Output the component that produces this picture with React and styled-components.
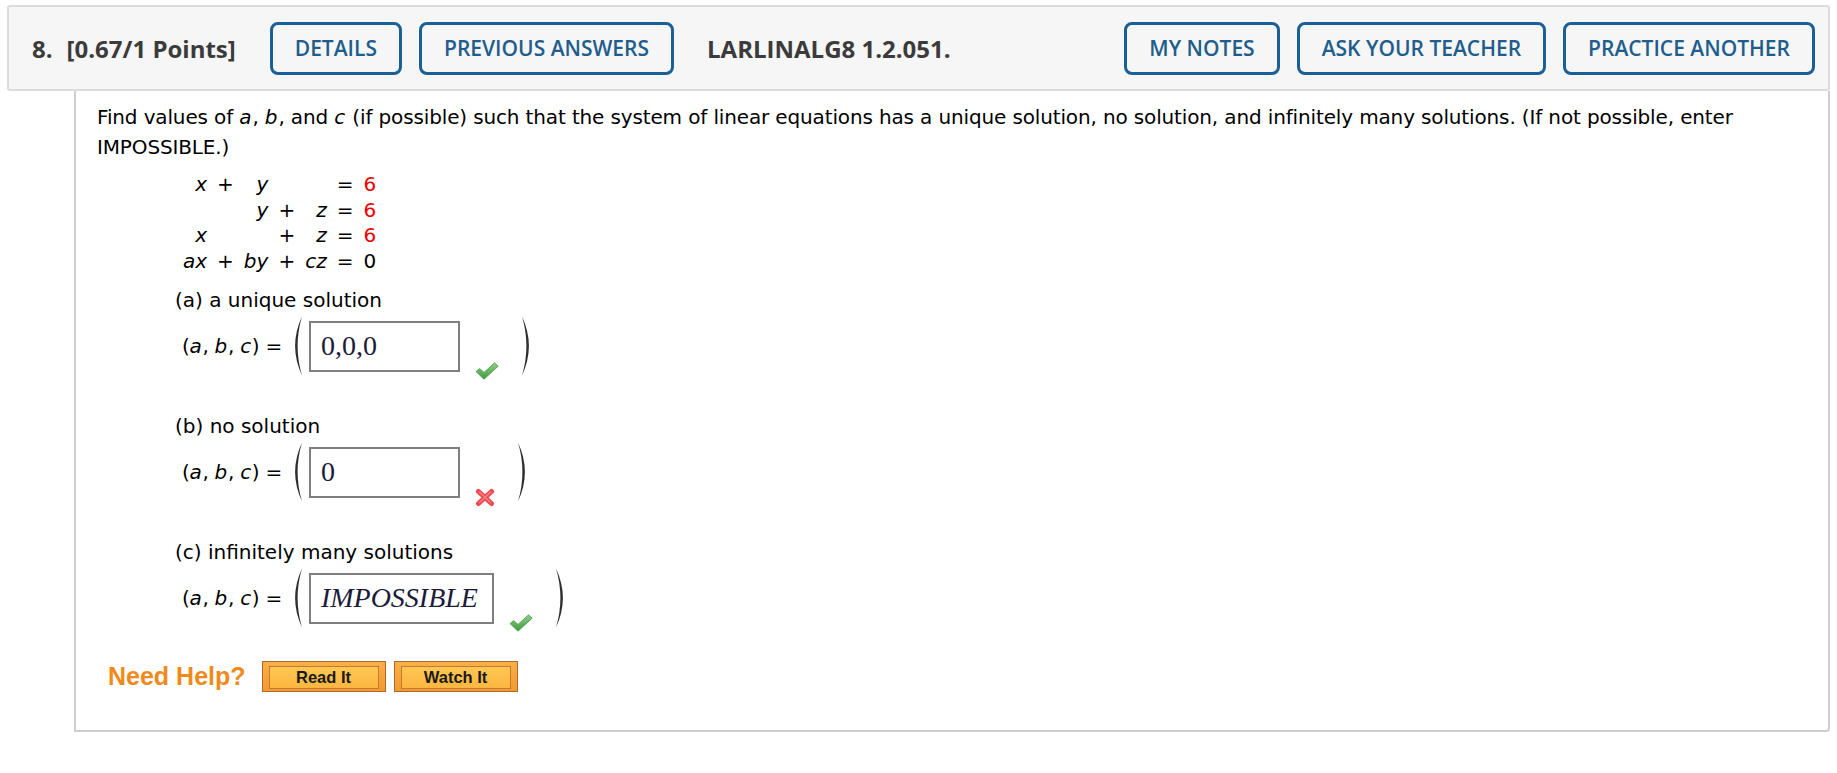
import React from 'react';
import styled, { createGlobalStyle } from 'styled-components';

const GlobalStyle = createGlobalStyle`
  html, body {
    margin: 0;
    padding: 0;
    background: #ffffff;
  }
  body {
    font-family: "DejaVu Sans", Verdana, sans-serif;
  }
`;

const Page = styled.div`
  padding: 5px 7px 0;
`;

const Header = styled.header`
  display: flex;
  align-items: center;
  height: 86px;
  box-sizing: border-box;
  padding: 0 13px 0 23px;
  background: #f6f6f6;
  border: 2px solid #dcdcdc;
  border-radius: 3px;
  font-family: "Open Sans", sans-serif;
  color: #3b3b3b;
`;

const QNumber = styled.span`
  font-size: 24px;
  font-weight: 700;
`;

const Points = styled.span`
  font-size: 24px;
  font-weight: 700;
  margin: 0 34px 0 14px;
`;

const BtnGroup = styled.div`
  display: flex;
  gap: 17px;
  margin-left: ${p => (p.$right ? 'auto' : '0')};
`;

const HeadButton = styled.button`
  height: 53px;
  box-sizing: border-box;
  padding: 0 22px;
  border: 3px solid #1a5f96;
  border-radius: 8px;
  background: transparent;
  font-family: "Open Sans", sans-serif;
  font-size: 21px;
  font-weight: 600;
  color: #1f5d8c;
  cursor: pointer;
`;

const QuestionId = styled.span`
  margin-left: 33px;
  font-size: 24px;
  font-weight: 700;
`;

const Panel = styled.section`
  margin-left: 67px;
  border: 2px solid #cfcfcf;
  border-top: none;
  border-bottom-right-radius: 4px;
  padding: 11px 20px 38px 21px;
  font-size: 20px;
  color: #000;
`;

const Prompt = styled.p`
  margin: 0;
  line-height: 30px;
  max-width: 1710px;
  letter-spacing: -0.14px;
`;

const Var = styled.i`
  padding-right: 1px;
`;

const Equations = styled.div`
  display: grid;
  grid-template-columns: repeat(7, auto);
  justify-content: start;
  column-gap: 10px;
  margin: 10px 0 0 86px;
  line-height: 25.5px;
`;

const Cell = styled.span`
  justify-self: ${p => p.$align || 'center'};
  font-style: ${p => (p.$var ? 'italic' : 'normal')};
  color: ${p => (p.$red ? '#f00000' : '#000')};
`;

const Parts = styled.div`
  display: flex;
  flex-direction: column;
  gap: 35px;
  margin-top: 11px;
`;

const PartLabel = styled.div`
  margin-left: 78px;
  line-height: 30px;
`;

const AnswerRow = styled.div`
  display: flex;
  align-items: center;
  height: 60px;
  margin: 1px 0 0 85px;
`;

const Tuple = styled.span`
  margin-right: 7px;
  letter-spacing: -0.3px;
`;

const Paren = styled.svg`
  flex: none;
  margin: ${p => (p.$right ? '0 0 0 22px' : '0 6px 0 0')};
`;

const AnswerBox = styled.div`
  display: flex;
  align-items: center;
  height: 51px;
  min-width: 151px;
  box-sizing: border-box;
  padding: 0 14px 0 10px;
  border: 2px solid #7f7f7f;
  font-family: "Liberation Serif", "Times New Roman", serif;
  font-size: 28px;
  font-style: ${p => (p.$italic ? 'italic' : 'normal')};
  color: #1b1b3a;
`;

const Mark = styled.svg`
  flex: none;
  align-self: flex-start;
  margin: ${p => p.$top}px 0 0 15px;
`;

const HelpRow = styled.div`
  display: flex;
  align-items: center;
  margin: 33px 0 0 11px;
`;

const NeedHelp = styled.span`
  font-family: "Liberation Sans", Arial, sans-serif;
  font-size: 25px;
  font-weight: 700;
  color: #ef8a1d;
  margin-right: 16px;
`;

const HelpButton = styled.button`
  width: 124px;
  height: 31px;
  box-sizing: border-box;
  padding: 4px 6px;
  margin-right: 8px;
  border: 1px solid #b0692a;
  background: linear-gradient(#f9b049, #f39a2c);
  cursor: pointer;
`;

const HelpInner = styled.span`
  display: flex;
  align-items: center;
  justify-content: center;
  height: 100%;
  border: 1px solid #c47a34;
  background: linear-gradient(#ffc853, #fbb640);
  font-family: "Liberation Sans", Arial, sans-serif;
  font-size: 16.5px;
  font-weight: 700;
  color: #1a1a1a;
`;

const LeftParen = () => (
  <Paren width="14" height="60" viewBox="0 0 14 60">
    <path d="M13 0.5 Q-0.8 30 13 59.5 Q4.2 30 13 0.5 Z" fill="#2e2e2e" />
  </Paren>
);

const RightParen = () => (
  <Paren $right width="14" height="60" viewBox="0 0 14 60">
    <path d="M1 0.5 Q14.8 30 1 59.5 Q9.8 30 1 0.5 Z" fill="#2e2e2e" />
  </Paren>
);

const CheckMark = () => (
  <Mark $top={46} width="24" height="18" viewBox="0 0 24 18">
    <defs>
      <linearGradient id="okg" x1="0" y1="0" x2="0" y2="1">
        <stop offset="0" stopColor="#8fd08a" />
        <stop offset="1" stopColor="#3f9a3f" />
      </linearGradient>
    </defs>
    <polygon
      points="1,9.6 4.6,6.6 9,10.4 19.6,0.8 23.2,4.2 9,17.2"
      fill="url(#okg)"
      stroke="#4b9a48"
      strokeWidth="0.8"
      strokeLinejoin="round"
    />
  </Mark>
);

const CrossMark = () => (
  <Mark $top={46} width="20" height="19" viewBox="0 0 20 19">
    <g stroke="#ec4a4f" strokeWidth="5" strokeLinecap="round">
      <line x1="3.5" y1="3.5" x2="16.5" y2="15.5" />
      <line x1="16.5" y1="3.5" x2="3.5" y2="15.5" />
    </g>
    <g stroke="#f47c80" strokeWidth="1.6" strokeLinecap="round">
      <line x1="4.5" y1="4.2" x2="15.5" y2="14.5" />
      <line x1="15.5" y1="4.2" x2="4.5" y2="14.5" />
    </g>
  </Mark>
);

const rows = [
  [['x', 'end', true], ['+'], ['y', 'end', true], [''], [''], ['='], ['6', 'start', false, true]],
  [[''], [''], ['y', 'end', true], ['+'], ['z', 'end', true], ['='], ['6', 'start', false, true]],
  [['x', 'end', true], [''], [''], ['+'], ['z', 'end', true], ['='], ['6', 'start', false, true]],
  [['ax', 'end', true], ['+'], ['by', 'end', true], ['+'], ['cz', 'end', true], ['='], ['0', 'start']],
];

const parts = [
  { label: '(a) a unique solution', value: '0,0,0', ok: true },
  { label: '(b) no solution', value: '0', ok: false },
  { label: '(c) infinitely many solutions', value: 'IMPOSSIBLE', ok: true, italic: true },
];

export default function App() {
  return (
    <>
      <GlobalStyle />
      <Page>
        <Header>
          <QNumber>8.</QNumber>
          <Points>[0.67/1 Points]</Points>
          <BtnGroup>
            <HeadButton>DETAILS</HeadButton>
            <HeadButton>PREVIOUS ANSWERS</HeadButton>
          </BtnGroup>
          <QuestionId>LARLINALG8 1.2.051.</QuestionId>
          <BtnGroup $right>
            <HeadButton>MY NOTES</HeadButton>
            <HeadButton>ASK YOUR TEACHER</HeadButton>
            <HeadButton>PRACTICE ANOTHER</HeadButton>
          </BtnGroup>
        </Header>

        <Panel>
          <Prompt>
            Find values of <Var>a</Var>, <Var>b</Var>, and <Var>c</Var> (if possible) such that
            the system of linear equations has a unique solution, no solution, and infinitely many
            solutions. (If not possible, enter IMPOSSIBLE.)
          </Prompt>

          <Equations>
            {rows.map((row, r) =>
              row.map(([t, align, isVar, red], c) => (
                <Cell key={`${r}-${c}`} $align={align} $var={isVar} $red={red}>
                  {t}
                </Cell>
              ))
            )}
          </Equations>

          <Parts>
            {parts.map(p => (
              <div key={p.label}>
                <PartLabel>{p.label}</PartLabel>
                <AnswerRow>
                  <Tuple>
                    (<Var>a</Var>, <Var>b</Var>, <Var>c</Var>) =
                  </Tuple>
                  <LeftParen />
                  <AnswerBox $italic={p.italic}>{p.value}</AnswerBox>
                  {p.ok ? <CheckMark /> : <CrossMark />}
                  <RightParen />
                </AnswerRow>
              </div>
            ))}
          </Parts>

          <HelpRow>
            <NeedHelp>Need Help?</NeedHelp>
            <HelpButton>
              <HelpInner>Read It</HelpInner>
            </HelpButton>
            <HelpButton>
              <HelpInner>Watch It</HelpInner>
            </HelpButton>
          </HelpRow>
        </Panel>
      </Page>
    </>
  );
}
